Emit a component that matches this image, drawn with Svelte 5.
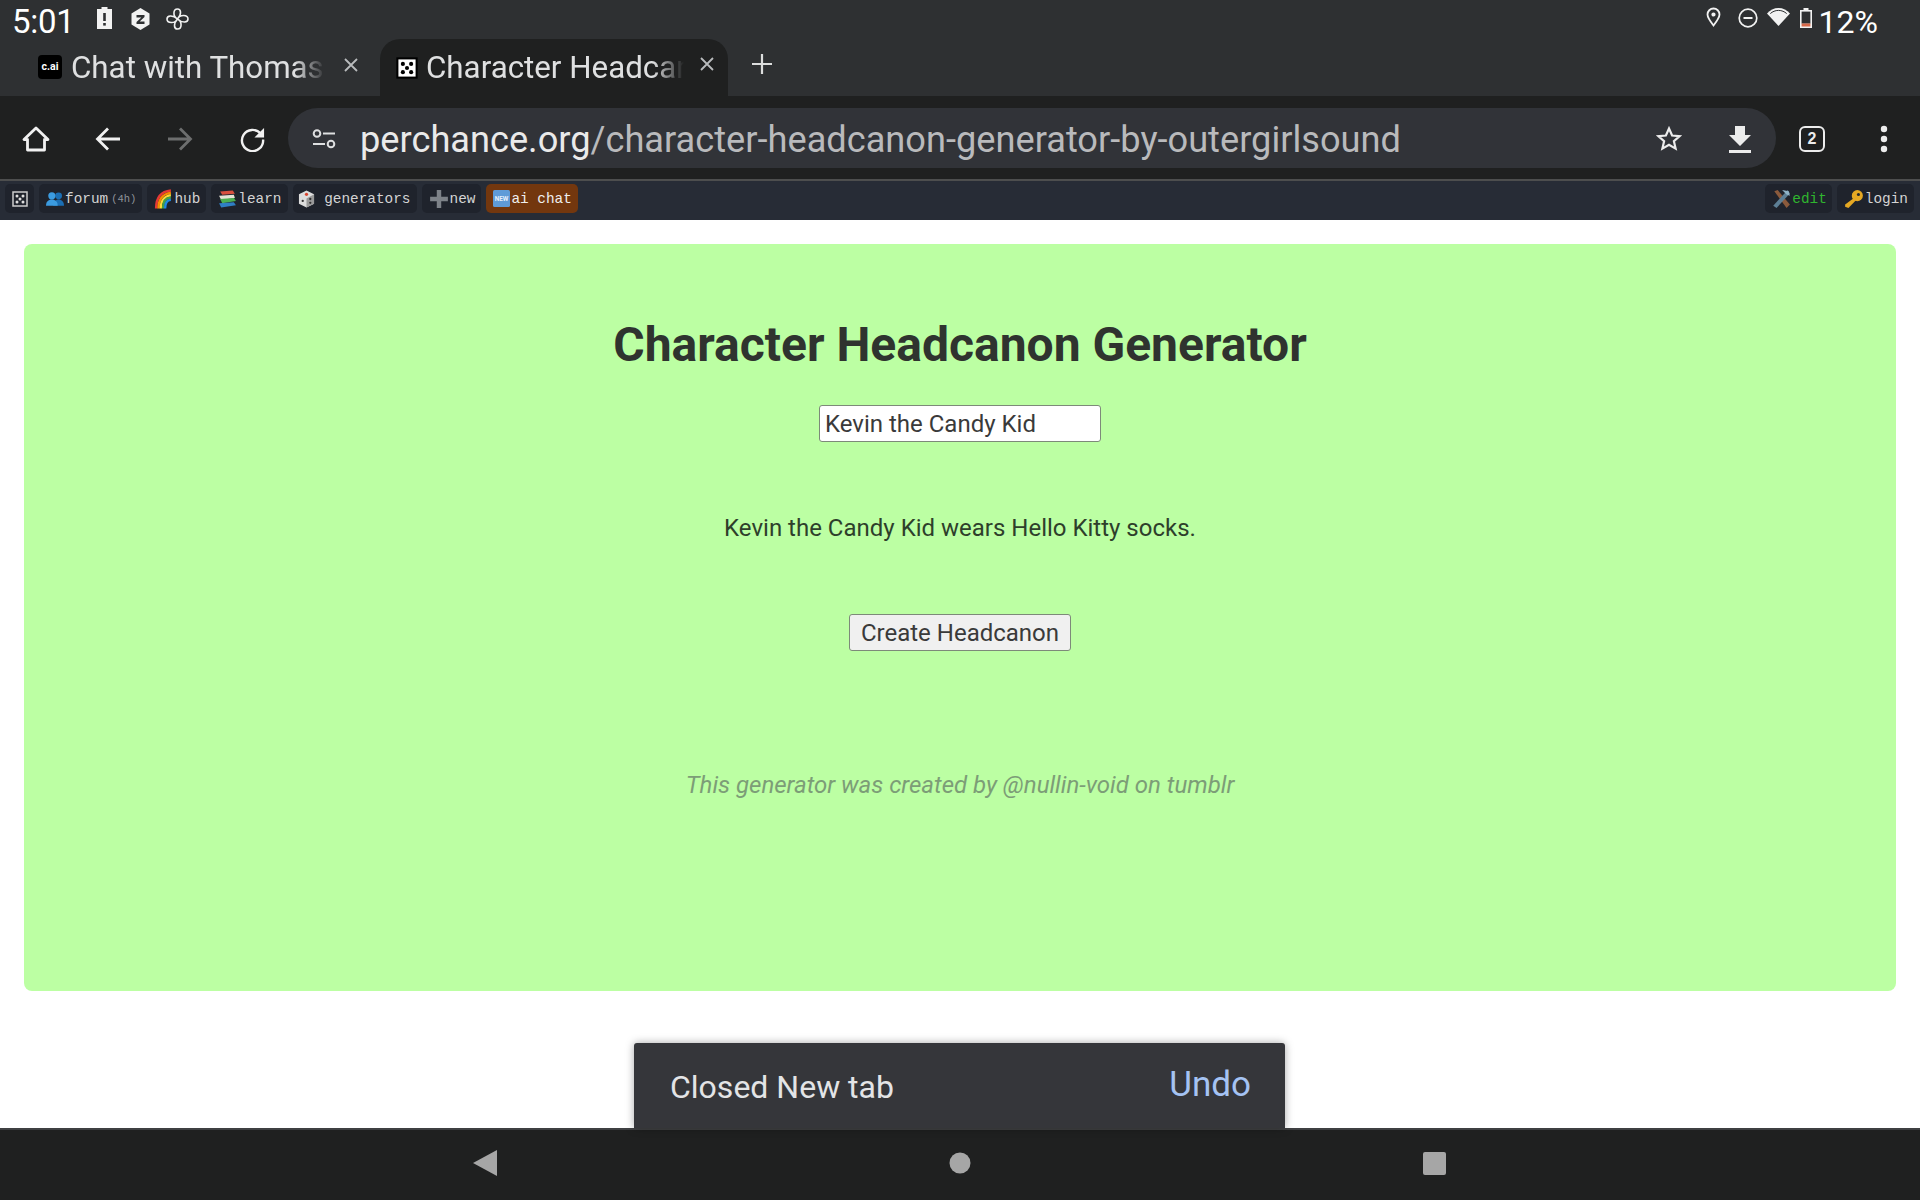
<script>
  const chips = [
    { id: 'forum', label: 'forum', extra: '(4h)' },
    { id: 'hub', label: 'hub' },
    { id: 'learn', label: 'learn' },
    { id: 'gen', label: ' generators' },
    { id: 'new', label: 'new' },
    { id: 'ai', label: 'ai chat', hot: true }
  ];
</script>

{#snippet die(size, bg, dot)}
  <svg width={size} height={size} viewBox="0 0 16 16"><rect x="1" y="1" width="14" height="14" fill={bg} stroke={dot === '#000' ? '#000' : '#ccc'} stroke-width="1.5"/><circle cx="5" cy="5" r="1.5" fill={dot}/><circle cx="11" cy="5" r="1.5" fill={dot}/><circle cx="8" cy="8" r="1.5" fill={dot}/><circle cx="5" cy="11" r="1.5" fill={dot}/><circle cx="11" cy="11" r="1.5" fill={dot}/></svg>
{/snippet}

{#snippet emoji(id)}
  {#if id === 'forum'}
    <svg width="18" height="17" viewBox="0 0 20 18"><circle cx="14" cy="6" r="3.800" fill="#1b6fb5"/><path d="M8 17c0-4.500 2.500-7 6-7s6 2.500 6 7z" fill="#1b6fb5"/><circle cx="6.500" cy="6" r="4" fill="#3b9be0"/><path d="M0 17c0-4.500 2.500-7 6.500-7s6.500 2.500 6.500 7z" fill="#3b9be0"/></svg>
  {:else if id === 'hub'}
    <svg width="19" height="22" viewBox="0 0 18 20" fill="none" stroke-width="2.300"><path d="M2 19C2 10 6 3 16 2" stroke="#e53935"/><path d="M4.200 19C4.200 11 8 5 16 4.200" stroke="#fb8c00"/><path d="M6.400 19C6.400 12 10 7 16 6.400" stroke="#fdd835"/><path d="M8.500 19C8.500 13 11 9 16 8.600" stroke="#43a047"/><path d="M10.500 19C10.500 14 12 11 16 10.800" stroke="#1e88e5"/></svg>
  {:else if id === 'learn'}
    <svg width="19" height="20" viewBox="0 0 18 18"><path d="M2 2l12-1 2 3-12 1z" fill="#d84f3f"/><path d="M1 6l14-1 1 3-13 2z" fill="#e6e2d5"/><path d="M2 9l13-1 2 3-13 2z" fill="#4caf50"/><path d="M1 13l14-1 2 3-14 2z" fill="#2f7fc4"/></svg>
  {:else if id === 'gen'}
    <svg width="17" height="20" viewBox="0 0 18 20"><path d="M9 1l8 4v10l-8 4-8-4V5z" fill="#ddd"/><path d="M9 9.500l8-4.500v10l-8 4z" fill="#999"/><circle cx="9" cy="5" r="1.700" fill="#d9442f"/><circle cx="5" cy="12" r="1.200" fill="#333"/><circle cx="13" cy="10" r="1.200" fill="#333"/><circle cx="13" cy="14" r="1.200" fill="#333"/></svg>
  {:else if id === 'new'}
    <svg width="20" height="20" viewBox="0 0 18 18"><path d="M7 1h4v6h6v4h-6v6H7v-6H1V7h6z" fill="#7d8288"/></svg>
  {:else if id === 'ai'}
    <svg width="17" height="17" viewBox="0 0 16 16"><rect width="16" height="16" rx="1.500" fill="#5f9bd8"/><text x="8" y="10.500" text-anchor="middle" font-size="6" font-family="Roboto, sans-serif" font-weight="700" fill="#e6f0fb">NEW</text></svg>
  {:else if id === 'edit'}
    <svg width="20" height="20" viewBox="0 0 18 18"><path d="M3 2l3-1 11 13-3 3z" fill="#8a5a3c"/><path d="M15 1l2 3-12 13-3-2z" fill="#5d7f95"/><path d="M10 1l6 1 1 4-3-1z" fill="#8fb3c7"/></svg>
  {:else}
    <svg width="20" height="20" viewBox="0 0 18 18"><circle cx="12" cy="6" r="5" fill="#e5a823"/><path d="M9 8l2 2-7 7-3-1v-2z" fill="#e5a823"/><circle cx="13" cy="5" r="1.400" fill="#26292e"/></svg>
  {/if}
{/snippet}

<div class="screen">
  <header class="chrome">
    <div class="status">
      <span class="time">5:01</span>
      <svg class="s1" width="15" height="22" viewBox="0 0 15 22"><path d="M4.500 0h6v2H15v20H0V2h4.500z" fill="#f2f2f2"/><rect x="6.200" y="6" width="2.600" height="8" fill="#2e3032"/><rect x="6.200" y="16" width="2.600" height="2.600" fill="#2e3032"/></svg>
      <svg class="s2" width="19" height="22" viewBox="0 0 19 22"><path d="M9.500 0l9 5.500v11l-9 5.500-9-5.500v-11z" fill="#f2f2f2"/><path d="M5.500 7h8v2l-4.800 4.500h4.800V16h-8v-2l4.800-4.500H5.500z" fill="#2e3032"/></svg>
      <svg class="s3" width="23" height="22" viewBox="0 0 23 22" fill="none" stroke="#f2f2f2" stroke-width="1.600"><path d="M11.500 11C6.500 8.500 7 1 11.500 1c3.500 0 4.500 5 0 10zM11.500 11c2.500-5 10.500-4.500 10.500 0 0 3.500-5.500 4.500-10.500 0zM11.500 11c5 2.500 4.500 10 0 10-3.500 0-4.500-5 0-10zM11.500 11c-2.500 5-10.500 4.500-10.500 0 0-3.500 5.500-4.500 10.500 0z"/></svg>
      <span class="grow"></span>
      <svg class="s4" width="15" height="20" viewBox="0 0 15 20" fill="none" stroke="#f2f2f2" stroke-width="1.800"><path d="M7.500 18.500C4 14 1.500 10.500 1.500 7.500a6 6 0 0 1 12 0c0 3-2.500 6.500-6 11z"/><circle cx="7.500" cy="7.500" r="1.200" fill="#f2f2f2"/></svg>
      <svg class="s5" width="20" height="20" viewBox="0 0 20 20" fill="none" stroke="#f2f2f2" stroke-width="1.700"><circle cx="10" cy="10" r="8.800"/><path d="M5.500 10h9" stroke-width="2"/></svg>
      <svg class="s6" width="23" height="18" viewBox="0 0 23 18"><path d="M11.500 18L0 5.500C3 2 7 0 11.500 0S20 2 23 5.500z" fill="#f2f2f2"/><path d="M3.300 5.600C5.500 3.600 8.300 2.400 11.500 2.400s6 1.200 8.200 3.200" fill="none" stroke="#2e3032" stroke-width="1"/></svg>
      <svg class="s7" width="12" height="20" viewBox="0 0 12 20"><path d="M3.500 0h5v2H12v18H0V2h3.500z" fill="#f2f2f2"/><rect x="1.600" y="3.600" width="8.800" height="12" fill="#2e3032"/><rect x="1.600" y="15.500" width="8.800" height="3" fill="#d8694a"/></svg>
      <span class="pct">12%</span>
    </div>
    <div class="tabs">
      <div class="tab">
        <span class="cai">c.ai</span>
        <span class="tab-title t1">Chat with Thomas</span>
        <svg class="x" width="16" height="16" viewBox="0 0 16 16"><path d="M2 2l12 12M14 2L2 14" stroke="#b9bbbd" stroke-width="1.800"/></svg>
      </div>
      <div class="tab active">
        {@render die(22, '#fff', '#000')}
        <span class="tab-title t2">Character Headcan</span>
        <svg class="x" width="16" height="16" viewBox="0 0 16 16"><path d="M2 2l12 12M14 2L2 14" stroke="#b9bbbd" stroke-width="1.800"/></svg>
      </div>
      <svg class="plus" width="20" height="20" viewBox="0 0 20 20"><path d="M10 0v20M0 10h20" stroke="#dcdddd" stroke-width="2.200"/></svg>
    </div>
  </header>

  <div class="toolbar">
    <button class="tool" aria-label="Home"><svg width="28" height="28" viewBox="0 0 28 28" fill="none" stroke="#f1f1f1" stroke-width="2.800" stroke-linejoin="round"><path d="M14 3L2 14.500h3.500V25h17V14.500H26z"/></svg></button>
    <button class="tool" aria-label="Back"><svg width="26" height="26" viewBox="0 0 26 26" fill="none" stroke="#f1f1f1" stroke-width="2.800"><path d="M25 13H3M13 2.500L2.500 13 13 23.500"/></svg></button>
    <button class="tool" aria-label="Forward"><svg width="26" height="26" viewBox="0 0 26 26" fill="none" stroke="#6d6e6e" stroke-width="2.800"><path d="M1 13h22M13 2.500L23.500 13 13 23.500"/></svg></button>
    <button class="tool" aria-label="Reload"><svg width="25" height="25" viewBox="0 0 26 26" fill="none"><path d="M21.500 7A11 11 0 1 0 24 13" stroke="#f1f1f1" stroke-width="2.500"/><path d="M25 1v10H15z" fill="#f1f1f1"/></svg></button>
    <div class="omni">
      <svg class="tune" width="24" height="20" viewBox="0 0 24 20" fill="none" stroke="#dedfe0" stroke-width="2"><circle cx="5" cy="4.500" r="3.300"/><path d="M11 4.500h12M1 15h12"/><circle cx="19" cy="15" r="3.300"/></svg>
      <span class="url"><b>perchance.org</b>/character-headcanon-generator-by-outergirlsound</span>
      <span class="grow"></span>
      <svg class="star" width="26" height="26" viewBox="0 0 26 26" fill="none" stroke="#ececec" stroke-width="2.200" stroke-linejoin="miter"><path d="M13 2.500l3.100 7 7.400.7-5.600 5 1.700 7.400-6.600-3.900-6.600 3.900 1.700-7.400-5.600-5 7.400-.7z"/></svg>
      <svg class="dl" width="22" height="27" viewBox="0 0 22 27"><path d="M6 0h10v9h6L11 20 0 9h6z" fill="#ececec"/><rect y="24" width="22" height="3" fill="#ececec"/></svg>
    </div>
    <button class="tool count" aria-label="2 tabs"><span>2</span></button>
    <button class="tool" aria-label="Menu"><svg width="8" height="28" viewBox="0 0 8 28"><circle cx="4" cy="4" r="3.200" fill="#ececec"/><circle cx="4" cy="14" r="3.200" fill="#ececec"/><circle cx="4" cy="24" r="3.200" fill="#ececec"/></svg></button>
  </div>

  <nav class="bookmarks">
    <span class="chip die-chip">{@render die(16, 'transparent', '#ddd')}</span>
    {#each chips as c}
      <span class="chip c-{c.id}" class:hot={c.hot}>
        {@render emoji(c.id)}
        <span class="lbl">{c.label}</span>
        {#if c.extra}<small>{c.extra}</small>{/if}
      </span>
    {/each}
    <span class="grow"></span>
    <span class="chip c-edit">{@render emoji('edit')}<span class="lbl green">edit</span></span>
    <span class="chip">{@render emoji('login')}<span class="lbl">login</span></span>
  </nav>

  <main class="page">
    <section class="card">
      <h1>Character Headcanon Generator</h1>
      <input class="name" value="Kevin the Candy Kid" aria-label="Character name" />
      <p class="result">Kevin the Candy Kid wears Hello Kitty socks.</p>
      <button class="create">Create Headcanon</button>
      <p class="credit">This generator was created by @nullin-void on tumblr</p>
    </section>
    <div class="toast">
      <span class="msg">Closed New tab</span>
      <span class="undo">Undo</span>
    </div>
  </main>

  <footer class="navbar">
    <svg class="tri" width="24" height="26" viewBox="0 0 24 26"><path d="M24 0v26L0 13z" fill="#a6a6a6"/></svg>
    <svg width="22" height="22" viewBox="0 0 22 22"><circle cx="11" cy="11" r="10.500" fill="#a6a6a6"/></svg>
    <svg width="23" height="23" viewBox="0 0 23 23"><rect width="23" height="23" rx="2" fill="#a6a6a6"/></svg>
  </footer>
</div>

<style>
  :global(body) { margin: 0; background: #fff; }
  .screen {
    width: 1920px; height: 1200px; display: flex; flex-direction: column;
    overflow: hidden; font-family: Roboto, sans-serif;
  }
  .grow { flex: 1; }
  .chrome { height: 96px; background: #2e3032; display: flex; flex-direction: column; flex: none; }
  .status { height: 39px; display: flex; align-items: flex-start; padding: 0 42px 0 12px; color: #fff; }
  .time { font-size: 33px; line-height: 44px; width: 85px; letter-spacing: -0.3px; }
  .s1 { margin-top: 7px; }
  .s2 { margin: 8px 0 0 19px; }
  .s3 { margin: 8px 0 0 16px; }
  .s4 { margin-top: 7px; }
  .s5 { margin: 8px 0 0 17px; }
  .s6 { margin: 8px 0 0 9px; }
  .s7 { margin: 8px 0 0 10px; }
  .pct { font-size: 32px; line-height: 44px; margin-left: 7px; }
  .tabs { flex: 1; display: flex; align-items: stretch; }
  .tab { display: flex; align-items: center; width: 380px; padding: 0 0 0 38px; box-sizing: border-box; color: #dfe0e1; position: relative; }
  .tab.active { width: 348px; padding: 0 0 0 16px; background: #1f2020; border-radius: 20px 20px 0 0; }
  .cai { width: 24px; height: 24px; border-radius: 4px; background: #000; color: #fff; font-size: 10.5px; font-weight: 700; text-align: center; line-height: 23px; flex: none; margin-bottom: 2px; }
  .tab-title {
    font-size: 31.3px; line-height: 44px; white-space: nowrap; overflow: hidden; margin-left: 9px;
    mask-image: linear-gradient(to right, #000 88%, transparent 100%);
  }
  .t1 { width: 254px; }
  .t2 { width: 258px; margin-left: 8px; }
  .x { position: absolute; top: 18px; right: 21px; }
  .tab.active .x { top: 17px; right: 13px; }
  .plus { align-self: center; margin: 0 0 7px 24px; }
  .toolbar { height: 85px; background: #1f2020; flex: none; display: flex; align-items: flex-start; padding: 12px 0 0; box-sizing: border-box; border-bottom: 2px solid #4d4e4e; }
  .tool { width: 72px; height: 60px; flex: none; padding: 2px 0 0; box-sizing: border-box; border: 0; background: none; display: flex; align-items: center; justify-content: center; }
  .omni { width: 1488px; height: 60px; border-radius: 30px; background: #313338; display: flex; align-items: center; padding: 0 25px 0 24px; box-sizing: border-box; color: #b9babc; }
  .tune { flex: none; margin-top: 2px; }
  .url { font-size: 36.2px; margin: 3px 0 0 24px; white-space: nowrap; }
  .url b { font-weight: 400; color: #eaeaea; }
  .star { margin: 2px 1px 0 0; }
  .dl { margin: 2px 0 0 46px; }
  .count span { width: 22px; height: 22px; border: 2.500px solid #ececec; border-radius: 6px; color: #ececec; font-size: 16px; font-weight: 700; display: flex; align-items: center; justify-content: center; }
  .bookmarks { height: 39px; flex: none; background: #272c36; display: flex; align-items: center; gap: 5px; padding: 0 6px 4px 5px; box-sizing: border-box; font-family: "Liberation Mono", monospace; font-size: 14.4px; }
  .chip { height: 29px; display: flex; align-items: center; padding: 0 6px 0 7px; gap: 1px; border-radius: 5px; background: #1f232c; color: #d4d4d4; box-sizing: border-box; white-space: pre; }
  .die-chip { width: 29px; justify-content: center; padding: 0; }
  .c-gen { padding-left: 5px; }
  .c-edit { padding: 0 5px 0 6px; }
  .chip small { font-size: 10.500px; color: #8f939a; margin-left: 2px; }
  .chip.hot { background: #73370e; color: #eee; }
  .green { color: #2fb52f; }
  .page { flex: 1; position: relative; background: #fff; padding: 24px 24px 0; min-height: 0; }
  .card {
    height: 747px; background: #bcffa3; border-radius: 8px; display: flex; flex-direction: column; align-items: center;
    box-sizing: border-box; padding-top: 71px; color: #2b2f2b;
  }
  h1 { margin: 0; font-size: 48px; line-height: 60px; font-weight: 700; color: #2f332f; }
  .name {
    width: 282px; height: 37px; box-sizing: border-box; margin-top: 30px; padding: 0 5px; border: 1px solid #7d8a79; border-radius: 3px;
    background: #fff; font: 24px Roboto, sans-serif; color: #3a3a3a;
  }
  .result { margin: 68px 0 0; font-size: 24px; line-height: 36px; color: #2e3f2b; }
  .create {
    width: 222px; height: 37px; margin-top: 68px; padding: 0; border: 1px solid #7d8a79; border-radius: 3px;
    background: #f0f0f0; font: 24px Roboto, sans-serif; color: #3a3a3a;
  }
  .credit { margin: 116px 0 0; font-size: 24px; line-height: 36px; font-style: italic; color: #7c9d77; }
  .toast {
    position: absolute; left: 634px; top: 823px; width: 651px; height: 85px; box-sizing: border-box;
    background: #35363a; border-radius: 3px 3px 0 0; box-shadow: 0 0 8px rgba(0,0,0,.35);
    padding: 24px 34px 0 36px; display: flex; justify-content: space-between; align-items: flex-start;
  }
  .msg { font-size: 32px; line-height: 40px; color: #e3e4e6; }
  .undo { font-size: 35px; line-height: 36px; font-weight: 400; color: #a5c3f3; }
  .navbar { height: 72px; flex: none; background: #1f2020; border-top: 2px solid #3f4042; padding-bottom: 4px; box-sizing: border-box; display: grid; grid-template-columns: repeat(3, 474px); justify-content: center; align-items: center; justify-items: center; }
  .tri { margin-right: 2px; }
</style>
